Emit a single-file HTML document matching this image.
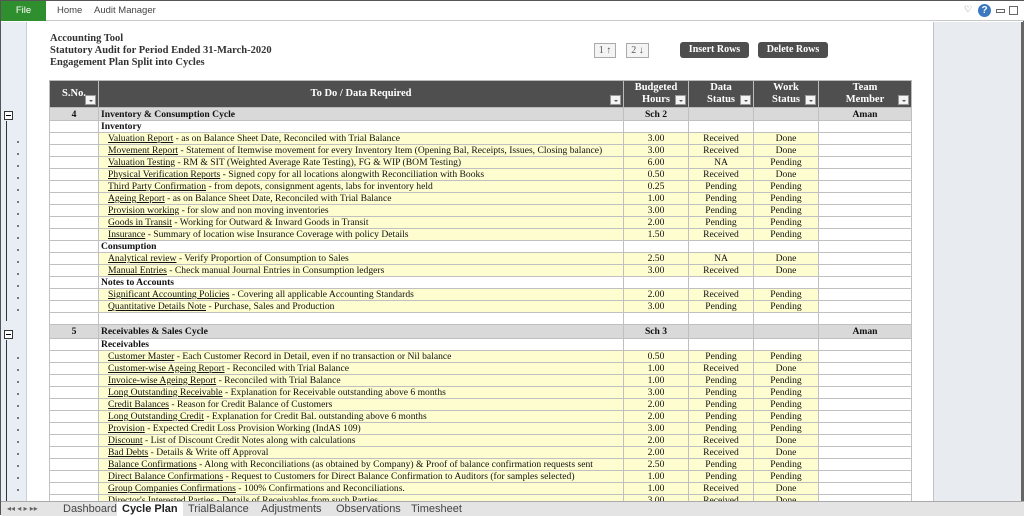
<!DOCTYPE html>
<html><head><style>
*{margin:0;padding:0;box-sizing:border-box}
body{width:1024px;height:515px;overflow:hidden;background:#fff;position:relative;font-family:"Liberation Serif",serif;border:1px solid #555}
.abs{position:absolute}
#rib{left:0;top:0;width:1024px;height:20px;border-bottom:1px solid #c8c8c8;background:#fff;font-family:"Liberation Sans",sans-serif;font-size:9.5px;color:#444}
#file{left:0;top:0;width:45px;height:20px;background:#2f8f2f;color:#fff;text-align:center;line-height:20px}
#gut{left:0;top:21px;width:26px;height:479px;background:#e9edf4;border-right:1px solid #c9cfd9}
#rp{left:932px;top:21px;width:88px;height:479px;background:#e8ecf1;border-left:1px solid #c0c4ca}
.ttl{left:49px;font-weight:bold;font-size:10.5px;color:#333}
.nb{top:42px;height:15px;border:1px solid #aaa;background:#f4f4f4;font-size:10px;text-align:center;line-height:13px;color:#555}
.db{top:41px;height:16px;background:#4e4e4e;color:#fff;border-radius:3px;font-weight:bold;font-size:10px;text-align:center;line-height:16px}
table{position:absolute;left:48px;top:79px;border-collapse:collapse;table-layout:fixed;font-size:9.6px;color:#111}
td{border:1px solid #c0c0c0;height:12px;line-height:11px;padding:0 2px;white-space:nowrap;overflow:hidden;text-align:center}
th{background:#4f4f4f;color:#fff;font-size:10.5px;line-height:12px;height:27px;border:1px solid #bbb;position:relative;font-weight:bold}
th i{position:absolute;right:2px;bottom:2px;width:11px;height:10px;background:#f3f3f3;border:1px solid #999}
th i:after{content:"";position:absolute;left:3px;top:4px;border-left:2px solid transparent;border-right:2px solid transparent;border-top:2px solid #555}
tr.s td{background:#d9d9d9;font-weight:bold;height:13px}
tr.s2 td{height:14px}
tr.h td.t{font-weight:bold;text-align:left}
tr.y td.y{background:#fdfdcf}
td.t{text-align:left}
tr.y td.t{padding-left:9px}
u{text-decoration:underline}
#tabs{left:0;top:500px;width:1024px;height:15px;background:#e4e4e4;border-top:1px solid #aaa;font-family:"Liberation Sans",sans-serif;font-size:11px;color:#444}
#tabs span{position:absolute;top:0;line-height:14px}
.dot{left:16px;width:2px;height:2px;background:#777}
</style></head><body>
<div id="rib" class="abs"><div id="file" class="abs">File</div>
<span class="abs" style="left:56px;top:4px">Home</span><span class="abs" style="left:93px;top:4px">Audit Manager</span>
<span class="abs" style="left:963px;top:3px;font-size:9px;color:#666">♡</span>
<div class="abs" style="left:977px;top:3px;width:13px;height:13px;border-radius:50%;background:#3a78c0;color:#fff;font-size:10px;text-align:center;line-height:13px;font-weight:bold">?</div>
<div class="abs" style="left:995px;top:8px;width:9px;height:4px;border:1px solid #666"></div>
<div class="abs" style="left:1008px;top:5px;width:9px;height:9px;border:1px solid #666"></div>
</div>
<div id="gut" class="abs"></div>
<div class="abs" style="left:26px;top:21px;width:22px;height:479px;background:#fff"></div>
<div id="rp" class="abs"></div>
<div class="abs" style="left:1020px;top:21px;width:4px;height:479px;background:#666"></div>
<div class="abs" style="left:3px;top:110px;width:9px;height:9px;border:1px solid #333;background:#fff"><div style="margin:3px 1px;height:1px;background:#000"></div></div>
<div class="abs" style="left:5px;top:120px;width:1px;height:200px;background:#333"></div>
<div class="abs" style="left:3px;top:329px;width:9px;height:9px;border:1px solid #333;background:#fff"><div style="margin:3px 1px;height:1px;background:#000"></div></div>
<div class="abs" style="left:5px;top:339px;width:1px;height:161px;background:#333"></div>
<div class="abs ttl" style="top:32px">Accounting Tool</div>
<div class="abs ttl" style="top:44px">Statutory Audit for Period Ended 31-March-2020</div>
<div class="abs ttl" style="top:56px">Engagement Plan Split into Cycles</div>
<div class="abs nb" style="left:593px;width:22px">1 ↑</div>
<div class="abs nb" style="left:625px;width:23px">2 ↓</div>
<div class="abs db" style="left:679px;width:69px">Insert Rows</div>
<div class="abs db" style="left:757px;width:70px">Delete Rows</div>
<table id="tb">
<colgroup><col style="width:49px"><col style="width:525px"><col style="width:65px"><col style="width:65px"><col style="width:65px"><col style="width:93px"></colgroup>
<tr><th>S.No.<i></i></th><th>To Do / Data Required<i></i></th><th>Budgeted<br>Hours<i></i></th><th>Data<br>Status<i></i></th><th>Work<br>Status<i></i></th><th>Team<br>Member<i></i></th></tr>
</table>
<div id="tabs" class="abs">
<span style="left:6px;font-size:8px;color:#666">◂◂ ◂ ▸ ▸▸</span>
<span style="left:62px">Dashboard</span>
<span style="left:116px;background:#fff;padding:0 5px;font-weight:bold;color:#222">Cycle Plan</span>
<span style="left:187px">TrialBalance</span>
<span style="left:260px">Adjustments</span>
<span style="left:335px">Observations</span>
<span style="left:410px">Timesheet</span>
</div>
<script>
const R=[
["s","4","Inventory & Consumption Cycle","Sch 2","","","Aman"],
["h","Inventory"],
["y","Valuation Report"," - as on Balance Sheet Date, Reconciled with Trial Balance","3.00","Received","Done"],
["y","Movement Report"," - Statement of Itemwise movement for every Inventory Item (Opening Bal, Receipts, Issues, Closing balance)","3.00","Received","Done"],
["y","Valuation Testing"," - RM & SIT (Weighted Average Rate Testing), FG & WIP (BOM Testing)","6.00","NA","Pending"],
["y","Physical Verification Reports"," - Signed copy for all locations alongwith Reconciliation with Books","0.50","Received","Done"],
["y","Third Party Confirmation"," - from depots, consignment agents, labs for inventory held","0.25","Pending","Pending"],
["y","Ageing Report"," - as on Balance Sheet Date, Reconciled with Trial Balance","1.00","Pending","Pending"],
["y","Provision working"," - for slow and non moving inventories","3.00","Pending","Pending"],
["y","Goods in Transit"," - Working for Outward & Inward Goods in Transit","2.00","Pending","Pending"],
["y","Insurance"," - Summary of location wise Insurance Coverage with policy Details","1.50","Received","Pending"],
["h","Consumption"],
["y","Analytical review"," - Verify Proportion of Consumption to Sales","2.50","NA","Done"],
["y","Manual Entries"," - Check manual Journal Entries in Consumption ledgers","3.00","Received","Done"],
["h","Notes to Accounts"],
["y","Significant Accounting Policies"," - Covering all applicable Accounting Standards","2.00","Received","Pending"],
["y","Quantitative Details Note"," - Purchase, Sales and Production","3.00","Pending","Pending"],
["b"],
["s2","5","Receivables & Sales Cycle","Sch 3","","","Aman"],
["h","Receivables"],
["y","Customer Master"," - Each Customer Record in Detail, even if no transaction or Nil balance","0.50","Pending","Pending"],
["y","Customer-wise Ageing Report"," - Reconciled with Trial Balance","1.00","Received","Done"],
["y","Invoice-wise Ageing Report"," - Reconciled with Trial Balance","1.00","Pending","Pending"],
["y","Long Outstanding Receivable"," - Explanation for Receivable outstanding above 6 months","3.00","Pending","Pending"],
["y","Credit Balances"," - Reason for Credit Balance of Customers","2.00","Pending","Pending"],
["y","Long Outstanding Credit"," - Explanation for Credit Bal. outstanding above 6 months","2.00","Pending","Pending"],
["y","Provision"," - Expected Credit Loss Provision Working (IndAS 109)","3.00","Pending","Pending"],
["y","Discount"," - List of Discount Credit Notes along with calculations","2.00","Received","Done"],
["y","Bad Debts"," - Details & Write off Approval","2.00","Received","Done"],
["y","Balance Confirmations"," - Along with Reconciliations (as obtained by Company) & Proof of balance confirmation requests sent","2.50","Pending","Pending"],
["y","Direct Balance Confirmations"," - Request to Customers for Direct Balance Confirmation to Auditors (for samples selected)","1.00","Pending","Pending"],
["y","Group Companies Confirmations"," - 100% Confirmations and Reconciliations.","1.00","Received","Done"],
["y","Director's Interested Parties"," - Details of Receivables from such Parties","3.00","Received","Done"]
];
let h="";
for(const r of R){
 if(r[0]=="s"||r[0]=="s2")h+=`<tr class="s ${r[0]}"><td>${r[1]}</td><td class="t">${r[2]}</td><td>${r[3]}</td><td></td><td></td><td>${r[6]}</td></tr>`;
 else if(r[0]=="h")h+=`<tr class="h"><td></td><td class="t">${r[1]}</td><td></td><td></td><td></td><td></td></tr>`;
 else if(r[0]=="b")h+=`<tr><td></td><td></td><td></td><td></td><td></td><td></td></tr>`;
 else h+=`<tr class="y"><td></td><td class="t y"><u>${r[1]}</u>${r[2]}</td><td class="y">${r[3]}</td><td class="y">${r[4]}</td><td class="y">${r[5]}</td><td></td></tr>`;
}
document.getElementById("tb").insertAdjacentHTML("beforeend",h);
let d="";
for(let y=140;y<500;y+=12){if(y>312&&y<350)continue;d+=`<div class="abs dot" style="top:${y}px"></div>`;}
document.body.insertAdjacentHTML("beforeend",d);
</script>
</body></html>
